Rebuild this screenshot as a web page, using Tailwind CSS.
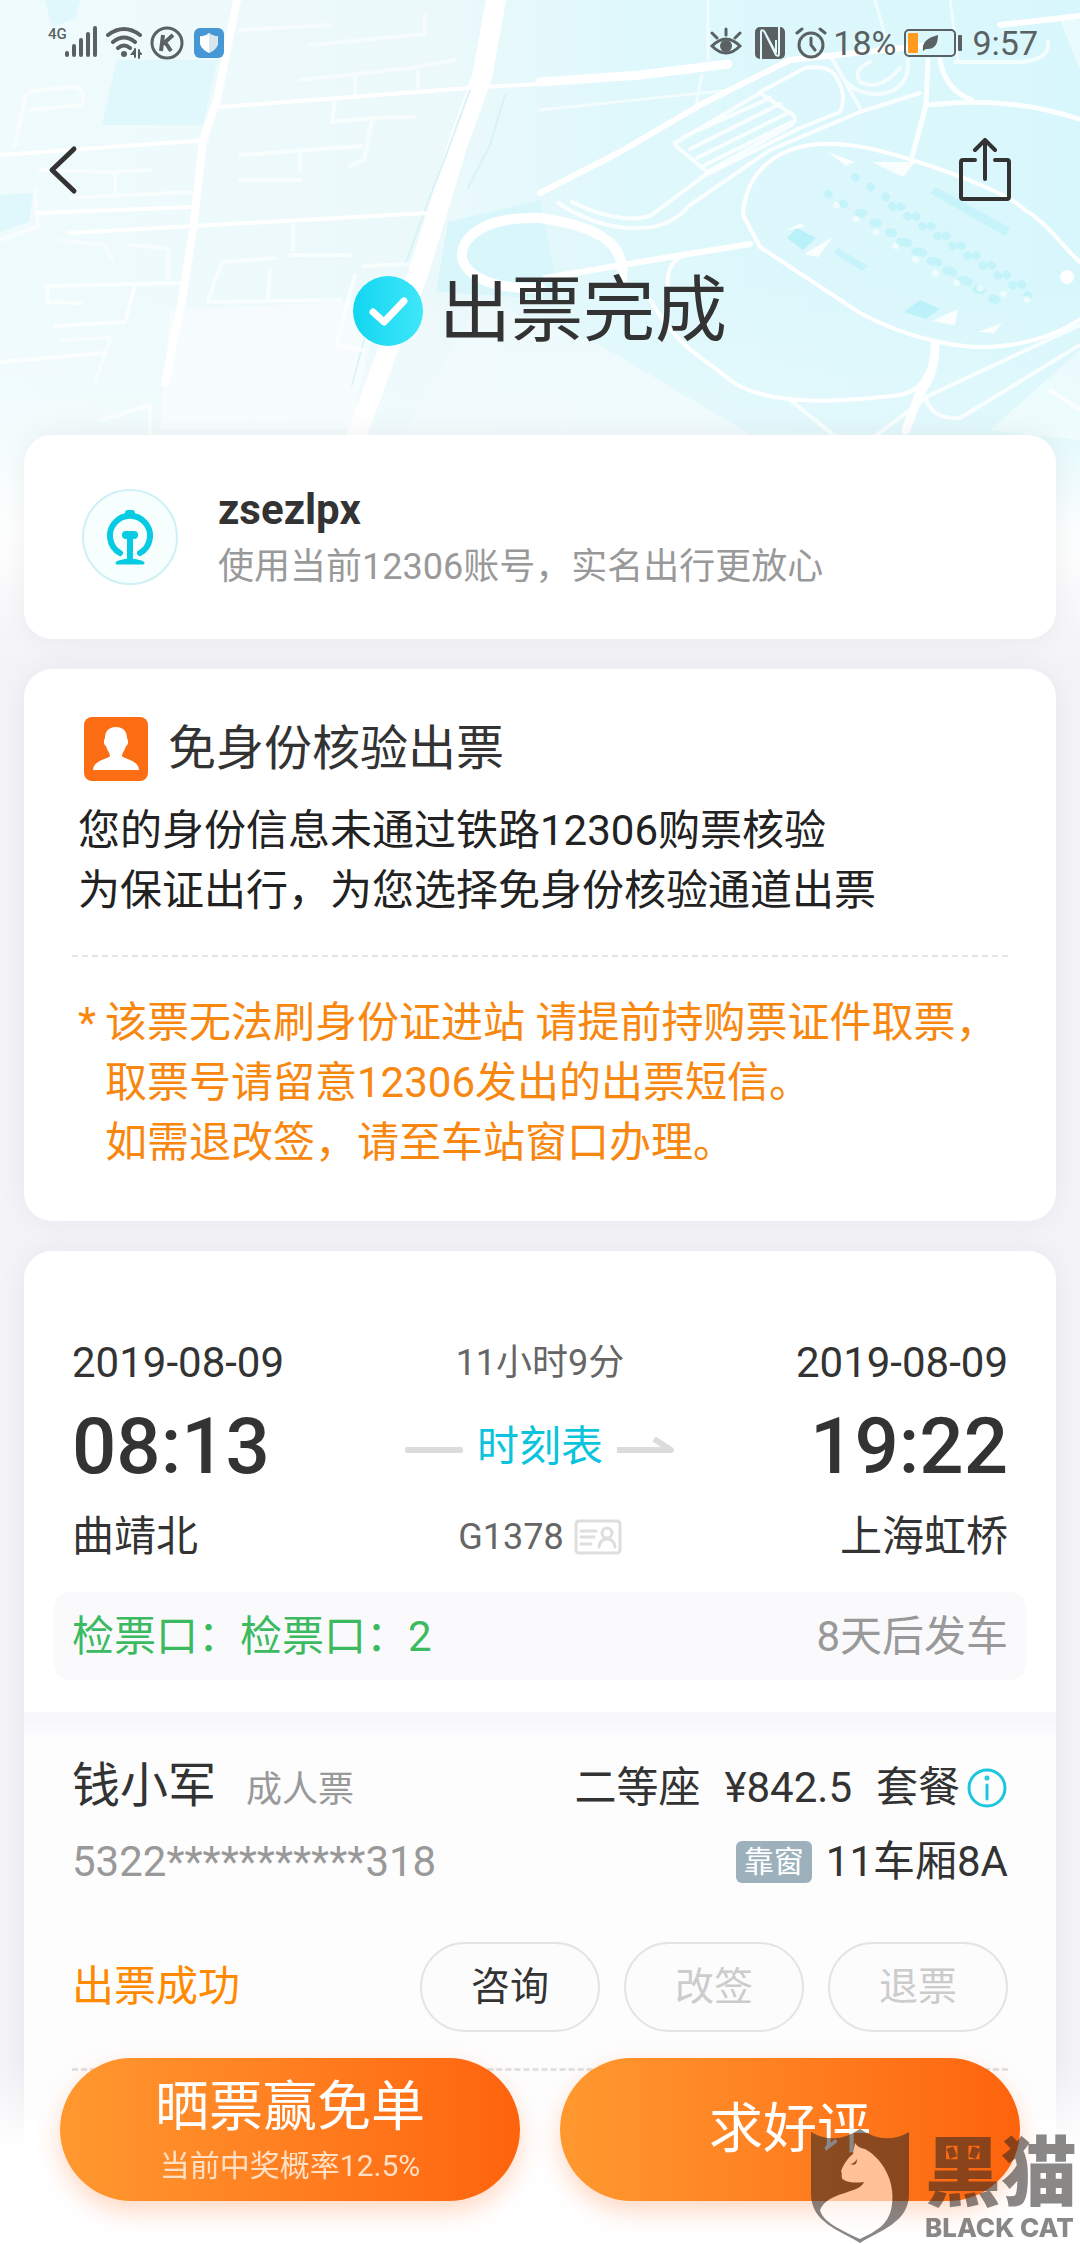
<!DOCTYPE html>
<html lang="zh-CN">
<head>
  <meta charset="UTF-8">
  <meta name="viewport" content="width=device-width, initial-scale=1.0">
  <title>出票完成</title>
  <script src="https://cdn.jsdelivr.net/npm/@tailwindcss/browser@4"></script>
</head>
<body class="bg-[#f3f3f8] font-[Roboto,'Noto_Sans_CJK_SC',sans-serif] text-[#333333]">

  <div class="relative min-h-screen overflow-hidden">

    <!-- Map backdrop -->
    <svg class="absolute inset-x-0 top-0 w-full" viewBox="0 0 1080 660" fill="none" stroke="#fff" stroke-linecap="round" stroke-linejoin="round" aria-hidden="true">
      <defs>
        <linearGradient id="sky" x1="0" y1="0.3" x2="1" y2="0.3">
          <stop offset="0" stop-color="#effbfd" />
          <stop offset="0.4" stop-color="#ecf9fb" />
          <stop offset="0.58" stop-color="#dff8fc" />
          <stop offset="1" stop-color="#d8f7fc" />
        </linearGradient>
        <linearGradient id="fade" x1="0" y1="0" x2="0" y2="1">
          <stop offset="0" stop-color="#fff" stop-opacity="0" />
          <stop offset="0.45" stop-color="#fff" stop-opacity="0.9" />
          <stop offset="0.6" stop-color="#fdfdfe" />
          <stop offset="1" stop-color="#f3f3f8" />
        </linearGradient>
      </defs>
      <rect width="1080" height="660" fill="url(#sky)" stroke="none" />
      <g stroke="none">
        <path fill="#e0f7fb" d="M117 60H217L203 125H102ZM45 0H80L76 18 52 27ZM0 195 33 193 29 222 0 232Z" />
        <path fill="#d9f6fb" d="M448 222 540 200 560 300 436 292Z" />
        <path fill="#f7fcfe" opacity=".8" d="M170 310 380 300 350 430H160Z" />
        <path fill="#f0fafd" opacity=".8" d="M480 300 600 345 760 440H400Z" />
        <path fill="#f1fcfe" opacity=".7" d="M1060 20 1080 20V70ZM990 430 1080 350V440Z" />
      </g>
      <path stroke-width="20" d="M496 0 482 77 458 143 437 213 417 277 389 347 355 440" />
      <path stroke-width="8" d="M237 0 217 100 203 140 193 230 182 300 165 383" />
      <g stroke-width="2" stroke="#d8f3f8">
        <path d="M470 90 446 155 427 205 405 265M505 95 490 145 468 188M352 385 364 340" />
      </g>
      <g stroke-width="4">
        <path d="M220 107 482 87 540 84" />
        <path d="M0 155 207 140M69 233 427 213M38 213 193 207" />
        <path d="M45 286 182 283M0 362 105 353M135 285 125 322 55 326M48 285 47 302 80 303" opacity=".7" />
        <path d="M208 300 222 262 275 258M270 270 268 300M208 302 340 300M293 225V250M290 255H350M363 266 412 264" opacity=".6" />
        <path d="M335 100 332 122 372 118 414 117M372 120 364 160 350 166M300 155V170M240 180H300M240 155 362 146" opacity=".6" />
        <path d="M15 145 25 98Q28 90 40 90L75 87Q86 90 82 105L30 110M0 240 38 226 35 190M40 170 110 172 150 170M115 175V195M70 198 190 192" opacity=".6" />
        <path d="M240 30 330 25M300 80 410 68 455 60M355 75V95M418 72V88M310 45 425 34V15M130 245 168 248 168 280M60 240 105 245 112 260M110 340 95 382M60 340 110 338" opacity=".5" />
        <path d="M355 275 336 345 362 350M100 420 150 405 150 440" opacity=".7" />
      </g>
      <path stroke-width="9" d="M540 82 640 75 728 64" />
      <path stroke-width="6" d="M540 193 620 152 700 105 790 60 930 45M1000 25 1080 16" />
      <path stroke-width="10" d="M622 280C628 240 590 225 540 218 480 216 460 240 462 258 468 280 500 290 540 288" />
      <path stroke-width="6" d="M545 278 670 257 750 244" />
      <path stroke-width="4" d="M743 215C745 180 765 160 790 150 830 135 880 150 912 160 960 175 1010 195 1025 210 1050 225 1065 250 1082 264M743 215 760 247 860 313C910 340 960 348 988 347 1030 345 1060 333 1082 318" />
      <path stroke-width="4" d="M675 143 760 93 793 115Q798 120 790 126L707 172 676 146M683 137 770 98M690 149 780 104M697 158 790 112M703 166 792 122" opacity=".8" />
      <path stroke-width="4" d="M558 203Q600 230 640 228 670 228 690 205L770 150 860 112 920 93M572 202Q620 225 650 216L712 170M700 178 800 128 840 112Q848 95 835 75 828 65 805 68L760 92" opacity=".85" />
      <path stroke-width="5" d="M912 157 926 105 928 60M928 105Q1010 95 1082 120M940 60Q945 90 972 100" opacity=".9" />
      <path stroke-width="4" d="M840 72Q850 95 880 94 910 90 908 60M900 68Q880 92 860 82 852 70 870 62M830 55 860 108M1048 42Q1050 60 1020 62H955" opacity=".7" />
      <path stroke-width="3" d="M708 0V60M875 0 885 35M950 0 958 60M540 110 730 90M702 75 695 110" opacity=".6" />
      <path stroke-width="4" d="M668 290Q665 265 682 256M650 300C680 350 700 355 730 380 770 410 860 400 900 395Q930 390 935 343" />
      <path stroke-width="9" d="M935 345Q935 375 920 392L906 430" />
      <path stroke-width="4" d="M790 400 840 440M1080 325 930 395 870 440M925 395Q930 420 960 418L1080 345M1050 390 1080 410" opacity=".8" />
      <g stroke="none" fill="#b9f1f9">
        <path d="M787 238 797 228 816 238 803 250ZM904 312 920 300 940 309 926 319Z" />
        <path opacity=".6" d="M936 187 1010 228 1005 236 930 193ZM838 248 868 266 862 271 834 253Z" />
      </g>
      <g stroke="#b9f1f9" stroke-width="8" opacity=".65">
        <path stroke-dasharray="1 17" d="M855 177 1030 290M828 194 1000 302M862 213 980 290M892 206 1035 300M900 242 1002 305" />
      </g>
      <g stroke="none">
        <path fill="#fff" opacity=".85" d="M828 152 855 162 846 166ZM872 162 915 162 903 177ZM784 231 802 223 804 227ZM804 254 833 237 818 257ZM932 321 958 309 955 325ZM978 332 1002 323 994 333Z" />
        <circle cx="1067" cy="277" r="7" fill="#fff" />
      </g>
      <path stroke="#fff" stroke-width="6" stroke-dasharray="1 23" opacity=".6" d="M836 205 945 280 1030 300" />
      <rect y="280" width="1080" height="380" fill="url(#fade)" stroke="none" opacity=".25" />
      <rect y="420" width="1080" height="240" fill="url(#fade)" stroke="none" />
    </svg>

    <div class="relative">
      <!-- Status bar -->
      <div class="flex justify-between items-center h-[86px] pl-[48px] pr-[42px] text-[#5a6163]">
        <div class="flex items-center">
          <svg class="w-[50px] h-[34px]" viewBox="0 0 50 34" fill="currentColor" aria-hidden="true">
            <text x="0" y="13" font-size="15" font-weight="500">4G</text>
            <rect x="17" y="25" width="4" height="6" rx="2" />
            <rect x="24" y="18" width="4" height="13" rx="2" />
            <rect x="31" y="12" width="4" height="19" rx="2" />
            <rect x="38" y="6" width="4" height="25" rx="2" />
            <rect x="45" y="0" width="4" height="31" rx="2" />
          </svg>
          <svg class="w-[36px] h-[34px] ml-2" viewBox="0 0 36 34" fill="none" stroke="currentColor" stroke-width="4" stroke-linecap="round" aria-hidden="true">
            <path d="M2 9Q18-3 34 9M7 16Q18 7 29 16M12 22Q18 17 24 22" />
            <circle cx="18" cy="28" r="3" fill="currentColor" stroke="none" />
            <path d="M29 23V31M29 24 26 28H29M33 24V32M33 26 35 28" stroke-width="2" />
          </svg>
          <svg class="w-[34px] h-[34px] ml-2" viewBox="0 0 34 34" fill="none" stroke="currentColor" stroke-width="3" aria-hidden="true">
            <circle cx="17" cy="17" r="15" />
            <path d="M13 9 11 25M23 9 13 18M15 16 21 25" stroke-width="4" />
          </svg>
          <svg class="w-[30px] h-[30px] ml-[10px]" viewBox="0 0 30 30" aria-hidden="true">
            <rect width="30" height="30" rx="6" fill="#4598d5" />
            <path d="M15 5Q19 9 24 8V16Q22 22 15 25 8 22 6 16V8Q11 9 15 5Z" fill="#fff" />
            <path d="M15 5Q19 9 24 8V16Q22 22 15 25Z" fill="#d9e6ef" />
          </svg>
        </div>
        <div class="flex items-center text-[34px] leading-[40px]">
          <svg class="w-[34px] h-[32px]" viewBox="0 0 34 32" fill="none" stroke="currentColor" stroke-width="3" stroke-linecap="round" aria-hidden="true">
            <path d="M3 19Q17 5 31 19 17 33 3 19ZM17 8V2M8 11 3 6M26 11 31 6" />
            <circle cx="17" cy="19" r="6" fill="currentColor" stroke="none" />
          </svg>
          <svg class="w-[30px] h-[32px] ml-[12px]" viewBox="0 0 30 32" aria-hidden="true">
            <rect width="30" height="32" rx="5" fill="currentColor" />
            <path d="M6 32V5Q6 2 9 4L21 26V13M24 0V27Q24 30 21 28L11 8" fill="none" stroke="#e3f8fb" stroke-width="2" />
          </svg>
          <svg class="w-[32px] h-[32px] ml-[10px]" viewBox="0 0 32 32" fill="none" stroke="currentColor" stroke-width="3" stroke-linecap="round" aria-hidden="true">
            <circle cx="16" cy="18" r="12" />
            <path d="M2 6 7 2M30 6 25 2M16 11V18L20 23" />
          </svg>
          <span class="ml-[6px]">18%</span>
          <svg class="w-[58px] h-[28px] ml-[8px]" viewBox="0 0 58 28" aria-hidden="true">
            <rect x="1" y="1" width="50" height="26" rx="4" fill="none" stroke="currentColor" stroke-width="2" />
            <rect x="4" y="4" width="10" height="20" rx="1" fill="#ff9a1c" />
            <path d="M19 22Q17 10 34 6 34 21 22 20Z" fill="currentColor" />
            <rect x="54" y="6" width="4" height="16" rx="1" fill="currentColor" />
          </svg>
          <span class="ml-[10px]">9:57</span>
        </div>
      </div>

      <!-- Header -->
      <header>
        <div class="flex justify-between items-center h-[168px] pl-[48px] pr-[68px]">
          <button type="button" aria-label="返回">
            <svg class="w-[30px] h-[50px]" viewBox="0 0 30 50" fill="none" stroke="#333" stroke-width="5" stroke-linecap="round" stroke-linejoin="round"><path d="M26 4 4 25 26 46" /></svg>
          </button>
          <button type="button" aria-label="分享">
            <svg class="w-[54px] h-[64px]" viewBox="0 0 54 64" fill="none" stroke="#333" stroke-width="4" stroke-linecap="round" stroke-linejoin="round">
              <path d="M17 22H5Q3 22 3 24V59Q3 61 5 61H49Q51 61 51 59V24Q51 22 49 22H37M27 41V2M17 12 27 2 37 12" />
            </svg>
          </button>
        </div>
        <div class="flex justify-center items-center gap-4 h-[114px]">
          <svg class="w-[70px] h-[70px]" viewBox="0 0 70 70" aria-hidden="true">
            <defs>
              <linearGradient id="done" x1="0" y1="0" x2="1" y2="0">
                <stop offset="0" stop-color="#12d6f0" />
                <stop offset="1" stop-color="#3fe6f9" />
              </linearGradient>
            </defs>
            <circle cx="35" cy="35" r="35" fill="url(#done)" />
            <path d="M20 36 31 46 51 25" fill="none" stroke="#fff" stroke-width="7" stroke-linecap="round" stroke-linejoin="round" />
          </svg>
          <h1 class="text-[72px] leading-[90px]">出票完成</h1>
        </div>
      </header>

      <main class="flex flex-col gap-[30px] px-6 pt-[67px]">
        <!-- 12306 account -->
        <section class="flex items-center gap-10 h-[204px] pl-[58px] pr-12 bg-white rounded-[28px] shadow-[0_0_30px_rgba(0,0,0,0.06)]">
          <div class="flex justify-center items-center w-[96px] h-[96px] rounded-full border-2 border-[#cdf1f5] bg-[#f6fefe]">
            <svg class="w-[48px] h-[56px]" viewBox="0 0 48 56" fill="none" stroke="#07cbe2" stroke-width="6" stroke-linecap="round" stroke-linejoin="round" aria-hidden="true">
              <path d="M14 44A20 20 0 1 1 34 44" />
              <path d="M20 26H28" stroke-width="8" />
              <path d="M24 26V52" />
              <path d="M11 54Q13 52 24 51 35 52 37 54Z" stroke-width="3" fill="#07cbe2" />
              <path d="M22 4H26" stroke-width="6" />
            </svg>
          </div>
          <div>
            <p class="text-[42px] leading-[60px] font-bold">zsezlpx</p>
            <p class="text-[36px] leading-[54px] text-[#999999]">使用当前12306账号，实名出行更放心</p>
          </div>
        </section>

        <!-- Identity check notice -->
        <section class="px-12 py-12 bg-white rounded-[28px] shadow-[0_0_30px_rgba(0,0,0,0.06)]">
          <div class="flex items-center gap-5 h-[64px] pl-3">
            <svg class="w-[64px] h-[64px]" viewBox="0 0 64 64" aria-hidden="true">
              <rect width="64" height="64" rx="8" fill="#fd6d14" />
              <path d="M32 10C40 10 43 15 43 21 45 24 44 28 42 29 41 33 38 36 38 39 39 42 55 43 55 53H9C9 43 25 42 26 39 26 36 23 33 22 29 20 28 19 24 21 21 21 15 24 10 32 10Z" fill="#fff" />
            </svg>
            <h2 class="text-[48px] leading-[64px]">免身份核验出票</h2>
          </div>
          <div class="mt-5 pl-[6px] text-[42px] leading-[60px] text-[#222222]">
            <p>您的身份信息未通过铁路12306购票核验</p>
            <p>为保证出行，为您选择免身份核验通道出票</p>
          </div>
          <hr class="mt-[34px] border-t-2 border-dashed border-[#e4e4e4]">
          <div class="flex mt-9 pl-[6px] text-[42px] leading-[60px] text-[#f8870f]">
            <span class="w-[27px] shrink-0">*</span>
            <p>该票无法刷身份证进站 请提前持购票证件取票，<br>取票号请留意12306发出的出票短信。<br>如需退改签，请至车站窗口办理。</p>
          </div>
        </section>

        <!-- Trip -->
        <section class="bg-[#fdfdfe] rounded-t-[28px] overflow-hidden shadow-[0_0_30px_rgba(0,0,0,0.06)] pb-[172px]">
          <div class="bg-white pt-[82px] pb-8">
            <div class="grid grid-cols-[1fr_auto_1fr] items-center px-12 text-[42px]">
              <p class="leading-[60px]">2019-08-09</p>
              <p class="leading-[60px] text-[36px] text-[#666666] text-center">11小时9分</p>
              <p class="leading-[60px] text-right">2019-08-09</p>

              <p class="leading-[108px] text-[78px] font-medium">08:13</p>
              <div class="flex items-center gap-[14px]">
                <svg class="w-[58px] h-[20px]" viewBox="0 0 58 20" aria-hidden="true"><rect y="10" width="58" height="6" rx="2" fill="#dcdcdc" /></svg>
                <a href="#" class="leading-[60px] text-[#0bc4dc]">时刻表</a>
                <svg class="w-[58px] h-[20px]" viewBox="0 0 58 20" fill="none" stroke="#dcdcdc" stroke-width="6" stroke-linejoin="round" aria-hidden="true"><path d="M0 13H54L37 2" /></svg>
              </div>
              <p class="leading-[108px] text-[78px] font-medium text-right">19:22</p>

              <p class="leading-[72px]">曲靖北</p>
              <div class="flex justify-center items-center gap-[10px] text-[36px] text-[#666666]">
                <span class="leading-[72px]">G1378</span>
                <svg class="w-[48px] h-[36px]" viewBox="0 0 48 36" fill="none" stroke="#dedede" stroke-width="3" stroke-linecap="round" aria-hidden="true">
                  <rect x="2" y="2" width="44" height="32" rx="3" />
                  <path d="M7 12H22M7 18H20M7 25H17M25 28Q26 20 33 20T41 28" />
                  <circle cx="33" cy="14" r="5" />
                </svg>
              </div>
              <p class="leading-[72px] text-right">上海虹桥</p>
            </div>
            <div class="flex justify-between items-center h-[88px] mt-[19px] mx-[30px] px-[18px] rounded-2xl bg-[#fafafc] text-[42px]">
              <p class="text-[#3bba62]">检票口：检票口：2</p>
              <p class="text-[#999999]">8天后发车</p>
            </div>
          </div>

          <!-- Passenger -->
          <div class="px-12 pt-11 bg-linear-to-b from-[#f6f6fb] to-[#fdfdfe] to-8%">
            <div class="flex justify-between leading-[60px] text-[42px]">
              <div class="flex items-baseline gap-[30px]">
                <h3 class="text-[48px]">钱小军</h3>
                <span class="text-[36px] text-[#999999]">成人票</span>
              </div>
              <div class="flex items-center">
                <span>二等座</span>
                <span class="ml-[24px]">¥842.5</span>
                <span class="ml-[24px]">套餐</span>
                <button type="button" class="ml-[6px]" aria-label="套餐说明">
                  <svg class="w-[42px] h-[42px]" viewBox="0 0 42 42" fill="none" stroke="#1cc6dc" stroke-width="3" stroke-linecap="round">
                    <circle cx="21" cy="21" r="18" />
                    <path d="M21 18V32" />
                    <circle cx="21" cy="11" r="1" />
                  </svg>
                </button>
              </div>
            </div>
            <div class="flex justify-between mt-3 leading-[60px] text-[42px]">
              <p class="text-[#999999]">5322***********318</p>
              <div class="flex items-center gap-[14px]">
                <span class="px-2 rounded-md bg-[#9cb1bc] text-white text-[30px] leading-[42px]">靠窗</span>
                <span>11车厢8A</span>
              </div>
            </div>
            <div class="flex justify-between items-center mt-[50px] pb-9 border-b-3 border-dashed border-[#dedede]">
              <p class="text-[42px] leading-[60px] text-[#ff8a00]">出票成功</p>
              <div class="flex gap-6 text-[39px]">
                <button type="button" class="w-[180px] h-[90px] rounded-full border-2 border-[#e4e4e4] bg-[#fcfcfc]">咨询</button>
                <button type="button" disabled class="w-[180px] h-[90px] rounded-full border-2 border-[#e4e4e4] bg-[#fcfcfc] text-[#cccccc]">改签</button>
                <button type="button" disabled class="w-[180px] h-[90px] rounded-full border-2 border-[#e4e4e4] bg-[#fcfcfc] text-[#cccccc]">退票</button>
              </div>
            </div>
          </div>
        </section>
      </main>
    </div>
  </div>

  <!-- Bottom actions -->
  <footer class="fixed inset-x-0 bottom-0 grid grid-cols-2 gap-10 px-[60px] pt-5 pb-[43px] bg-linear-to-b from-white/0 from-10% to-white to-55% text-white">
    <button type="button" class="flex flex-col justify-center items-center h-[143px] rounded-full bg-linear-to-r from-[#ff982f] to-[#fe630c] shadow-[0_10px_24px_rgba(255,100,20,0.25)]">
      <span class="text-[54px] leading-[72px]">晒票赢免单</span>
      <span class="text-[30px] leading-[44px] text-[#ffe0c4]">当前中奖概率12.5%</span>
    </button>
    <button type="button" class="h-[143px] rounded-full bg-linear-to-r from-[#ff982f] to-[#fe630c] shadow-[0_10px_24px_rgba(255,100,20,0.25)] text-[54px]">求好评</button>
  </footer>

  <!-- Black Cat stamp -->
  <div class="fixed right-0 bottom-0 flex items-end gap-4 opacity-55 text-[#2a2626] pointer-events-none">
    <svg class="w-[98px] h-[116px]" viewBox="0 0 98 116" aria-hidden="true">
      <path fill="currentColor" d="M0 4Q24 18 49 1 74 18 98 4V66C98 94 70 102 49 115 28 102 0 94 0 66Z" />
      <path fill="#fff" d="M44 15Q47 20 54 21C74 32 86 58 80 82 76 96 68 102 49 111 28 101 12 94 9 82 17 63 49 66 53 54 47 55 38 55 33 52 29 50 32 46 30 43 34 34 37 30 42 26Z" />
      <path fill="currentColor" d="M39 36Q43 36 46 31 46 39 39 36Z" />
    </svg>
    <div class="w-[155px]">
      <p class="text-[76px] leading-[76px] font-black">黑猫</p>
      <p class="font-[Inter,sans-serif] text-[26px] leading-[32px] font-extrabold whitespace-nowrap">BLACK CAT</p>
    </div>
  </div>

</body>
</html>
